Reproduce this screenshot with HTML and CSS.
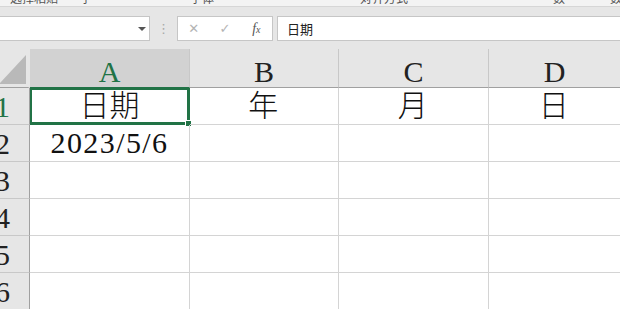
FILE: index.html
```html
<!DOCTYPE html>
<html lang="zh-CN">
<head>
    <meta charset="UTF-8">
    <title>工作表</title>
    <link rel="stylesheet" href="styles.css">
</head>
<body>
    <div class="ribbon">
        <span class="rb rb1">选择粘贴</span>
        <span class="rb rb2">字</span>
        <span class="rb rb3">字体</span>
        <span class="rb rb4">对齐方式</span>
        <span class="rb rb5">数</span>
        <span class="rb rb6">数</span>
    </div>

    <div class="formula-bar">
        <div class="name-box">
            <span class="drop"></span>
        </div>
        <div class="grip">⋮</div>
        <div class="fx-box">
            <span class="fx-btn">✕</span>
            <span class="fx-btn">✓</span>
            <span class="fx-btn fx"><i>f</i><small>x</small></span>
        </div>
        <div class="formula-input">日期</div>
    </div>

    <div class="sheet">
        <div class="corner"><span class="tri"></span></div>
        <div class="col-head active">A</div>
        <div class="col-head">B</div>
        <div class="col-head">C</div>
        <div class="col-head last">D</div>

        <div class="row-head active">1</div>
        <div class="cell selected">日期<span class="handle"></span></div>
        <div class="cell">年</div>
        <div class="cell">月</div>
        <div class="cell last">日</div>

        <div class="row-head">2</div>
        <div class="cell">2023/5/6</div>
        <div class="cell"></div>
        <div class="cell"></div>
        <div class="cell last"></div>

        <div class="row-head">3</div>
        <div class="cell"></div>
        <div class="cell"></div>
        <div class="cell"></div>
        <div class="cell last"></div>

        <div class="row-head">4</div>
        <div class="cell"></div>
        <div class="cell"></div>
        <div class="cell"></div>
        <div class="cell last"></div>

        <div class="row-head">5</div>
        <div class="cell"></div>
        <div class="cell"></div>
        <div class="cell"></div>
        <div class="cell last"></div>

        <div class="row-head">6</div>
        <div class="cell"></div>
        <div class="cell"></div>
        <div class="cell"></div>
        <div class="cell last"></div>
    </div>
</body>
</html>
```

FILE: styles.css
```css
body {
    margin: 0;
    width: 620px;
    height: 309px;
    overflow: hidden;
    background: #e6e6e6;
    font-family: "Liberation Serif", "Noto Sans CJK SC", serif;
}
.ribbon {
    position: relative;
    height: 6px;
    background: #f3f3f3;
    border-bottom: 1px solid #d6d6d6;
    overflow: hidden;
}
.rb {
    position: absolute;
    top: -9px;
    font-family: "Noto Sans CJK SC", sans-serif;
    font-size: 12px;
    line-height: 14px;
    color: #555;
}
.rb1 { left: 10px; }
.rb2 { left: 80px; }
.rb3 { left: 190px; }
.rb4 { left: 360px; }
.rb5 { left: 553px; }
.rb6 { left: 610px; }
.formula-bar {
    display: flex;
    align-items: stretch;
    height: 25px;
    margin-top: 9px;
}
.name-box {
    width: 149px;
    background: #fff;
    border: 1px solid #c6c6c6;
    border-left: none;
    position: relative;
}
.drop {
    position: absolute;
    left: 138px;
    top: 10px;
    border-left: 4px solid transparent;
    border-right: 4px solid transparent;
    border-top: 4px solid #555;
}
.grip {
    width: 27px;
    text-align: center;
    color: #a8a8a8;
    font-family: "DejaVu Sans", sans-serif;
    font-size: 13px;
    line-height: 25px;
}
.fx-box {
    width: 94px;
    display: flex;
    background: #fff;
    border: 1px solid #c6c6c6;
}
.fx-btn {
    flex: 1;
    text-align: center;
    line-height: 23px;
    color: #b4b4b4;
    font-family: "DejaVu Sans", sans-serif;
    font-size: 13px;
}
.fx {
    color: #555;
    font-family: "Liberation Serif", serif;
    font-size: 14px;
}
.fx small {
    font-size: 10px;
    font-style: italic;
}
.formula-input {
    flex: 1;
    margin-left: 4px;
    background: #fff;
    border: 1px solid #c6c6c6;
    border-right: none;
    padding-left: 9px;
    font-family: "Noto Sans CJK SC", sans-serif;
    font-size: 13px;
    line-height: 23px;
    color: #222;
}
.sheet {
    display: grid;
    grid-template-columns: 30px 160px 149px 150px 1fr;
    grid-template-rows: 39px repeat(6, 37px);
    margin-top: 8px;
    background: #fff;
}
.corner {
    background: #e6e6e6;
    border-bottom: 1px solid #a0a0a0;
    border-right: 2px solid #e6e6e6;
    position: relative;
    box-sizing: border-box;
}
.tri {
    position: absolute;
    right: 2px;
    bottom: 3px;
    border-left: 27px solid transparent;
    border-bottom: 29px solid #b9b9b9;
}
.col-head {
    background: #e6e6e6;
    border-right: 1px solid #c8c8c8;
    border-bottom: 1px solid #a0a0a0;
    text-align: center;
    font-size: 30px;
    line-height: 45px;
    color: #222;
    overflow: hidden;
}
.col-head.active {
    background: #d2d2d2;
    color: #217346;
    border-bottom-color: #217346;
}
.col-head.last, .cell.last {
    border-right: none;
}
.row-head {
    background: #e6e6e6;
    border-right: 1px solid #a0a0a0;
    border-bottom: 1px solid #c8c8c8;
    text-indent: -5px;
    font-size: 30px;
    line-height: 38px;
    color: #222;
    overflow: hidden;
}
.row-head.active {
    color: #217346;
}
.cell {
    border-right: 1px solid #d4d4d4;
    border-bottom: 1px solid #d4d4d4;
    text-align: center;
    font-size: 30px;
    font-weight: 300;
    line-height: 36px;
    color: #111;
    letter-spacing: 1.4px;
    position: relative;
}
.cell.selected {
    box-shadow: inset 0 0 0 2px #217346;
    border-right-color: #217346;
    border-bottom-color: #217346;
    letter-spacing: 0;
}
.handle {
    position: absolute;
    right: -3px;
    bottom: -3px;
    width: 5px;
    height: 5px;
    background: #217346;
    border: 1px solid #fff;
}
```
